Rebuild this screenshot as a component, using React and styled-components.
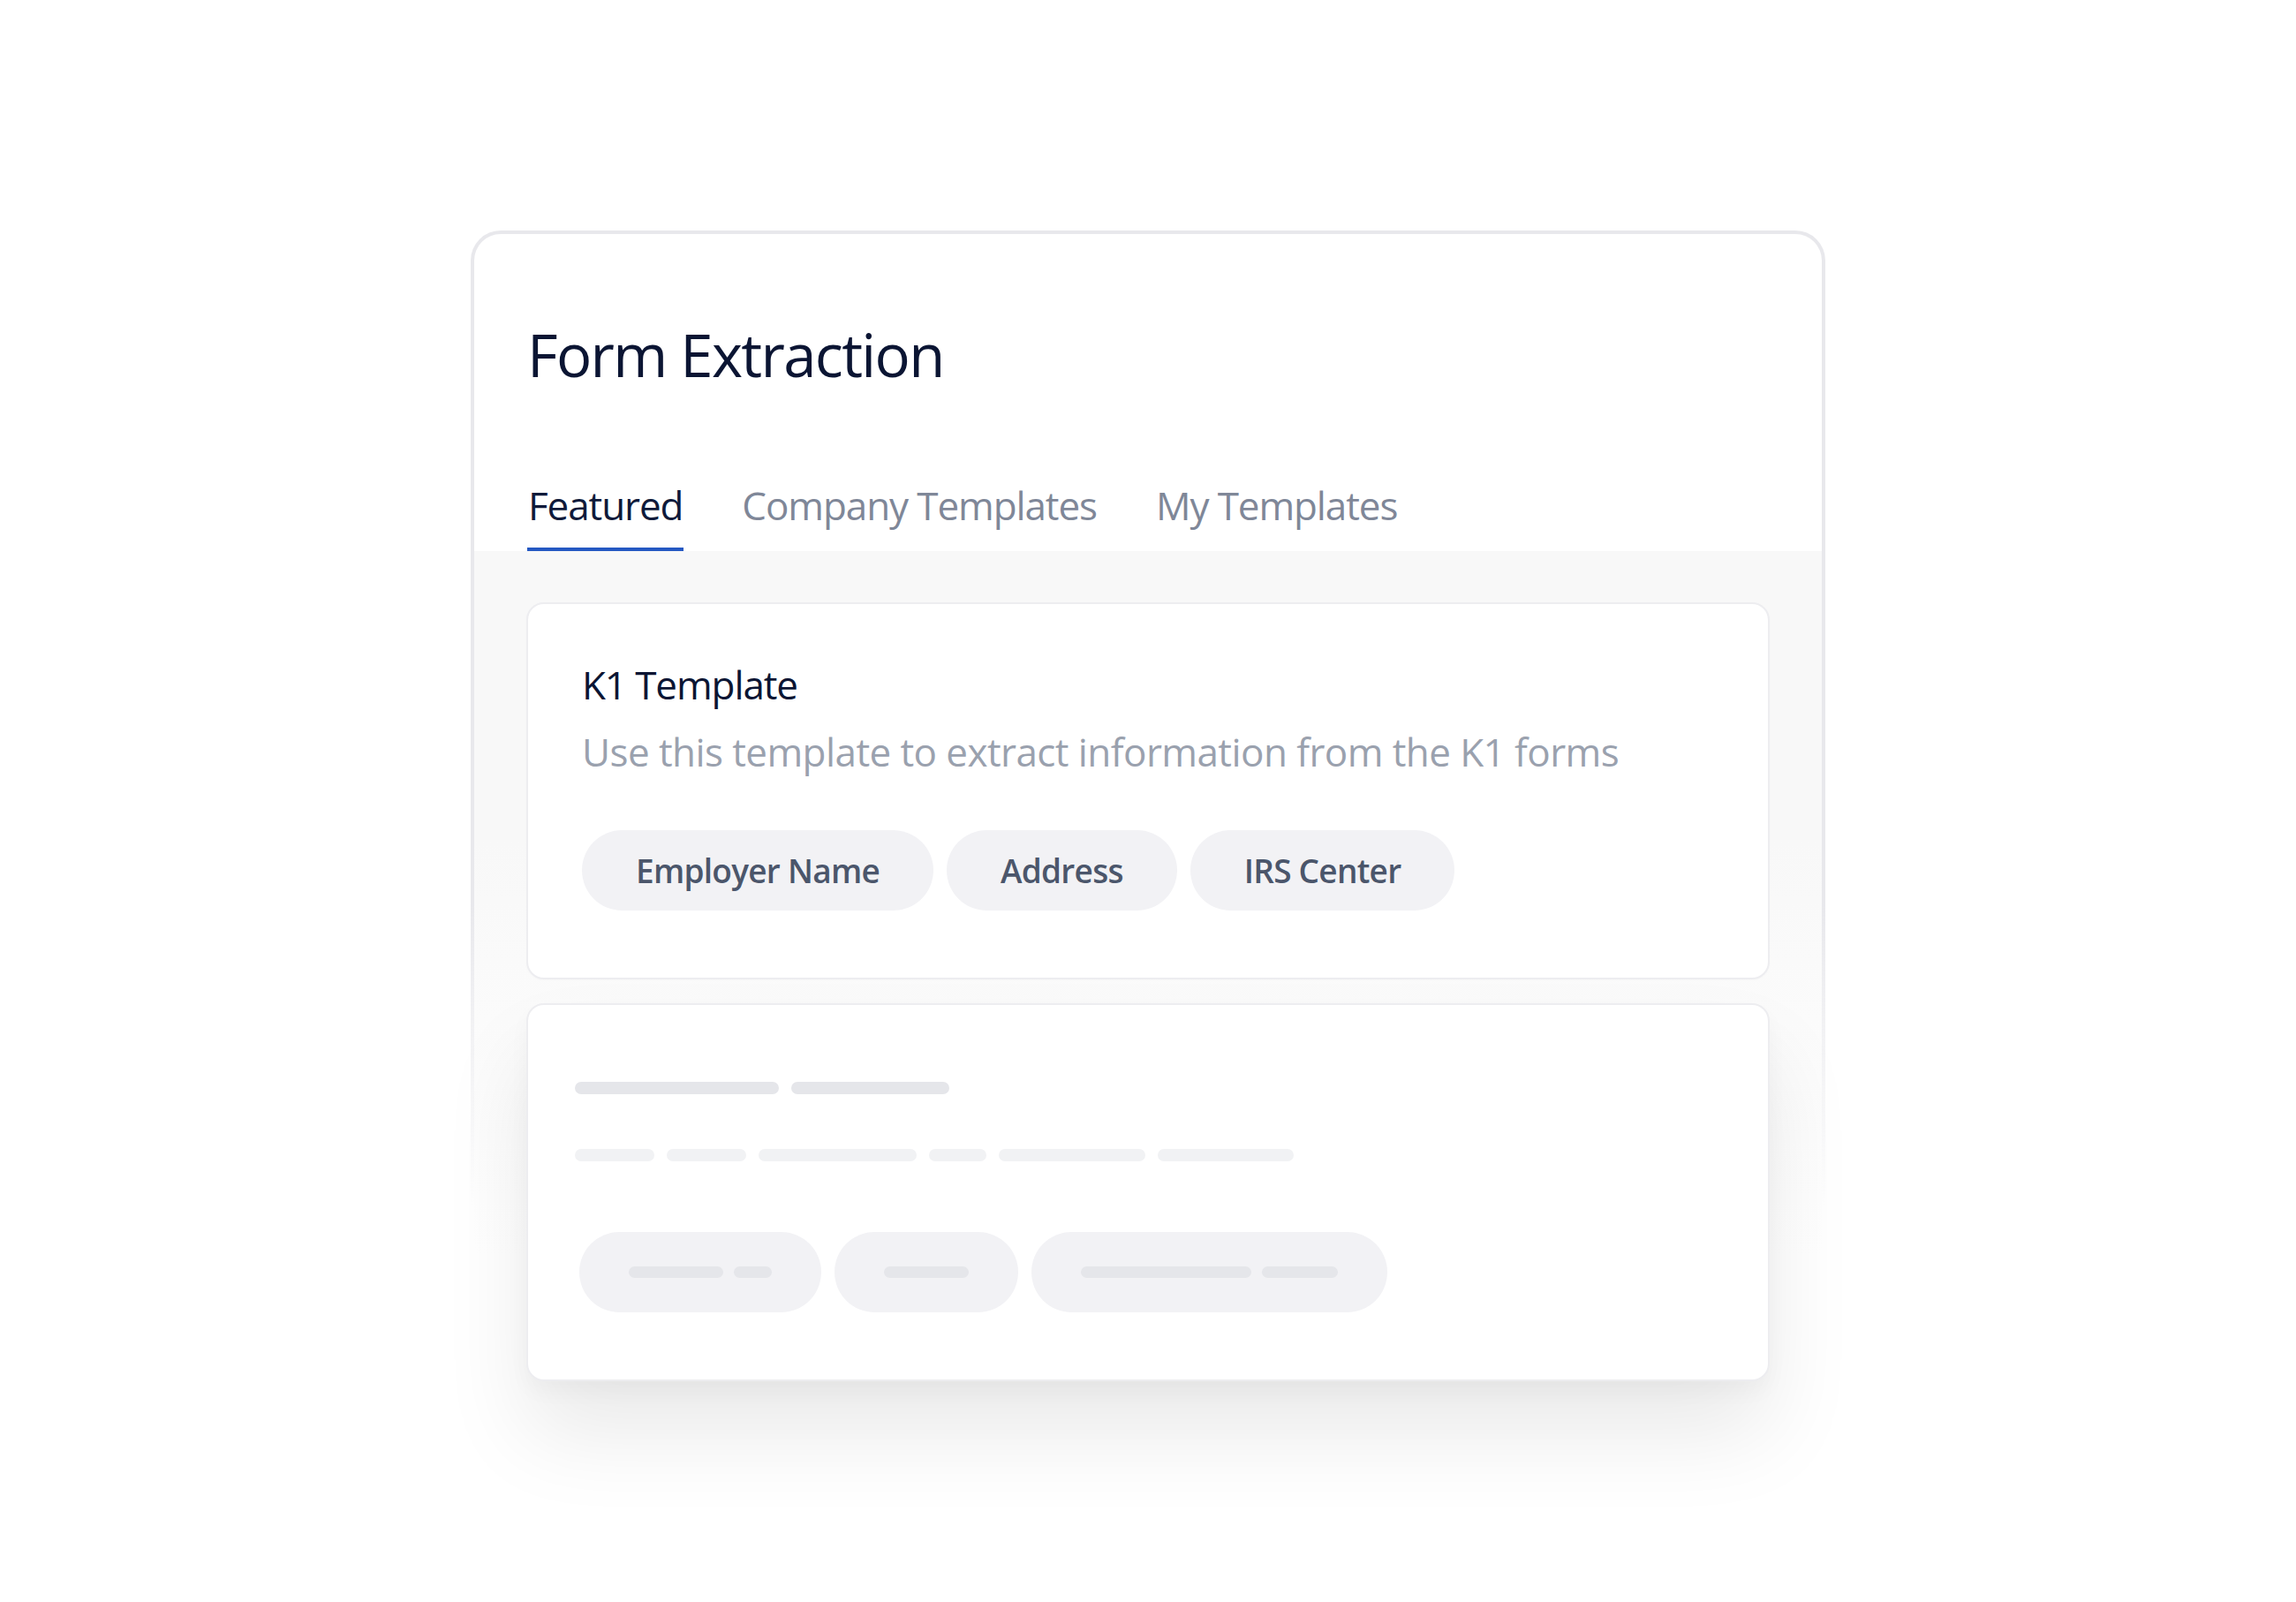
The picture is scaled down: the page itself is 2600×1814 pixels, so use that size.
import React from "react";
import styled, { createGlobalStyle } from "styled-components";

const GlobalStyle = createGlobalStyle`
  html, body {
    margin: 0;
    padding: 0;
    background: #ffffff;
  }
  body {
    font-family: "Open Sans", "Noto Sans", "Liberation Sans", sans-serif;
    -webkit-font-smoothing: antialiased;
  }
`;

const Page = styled.div`
  width: 2600px;
  height: 1814px;
  box-sizing: border-box;
  padding: 261px 0 0 533px;
  display: flex;
  align-items: flex-start;
`;

const Panel = styled.section`
  width: 1534px;
  height: 1226px;
  box-sizing: border-box;
  display: flex;
  flex-direction: column;
  border: 4px solid transparent;
  border-bottom-width: 0;
  border-radius: 34px 34px 0 0;
  background:
    linear-gradient(#ffffff, #ffffff) padding-box,
    linear-gradient(
        to bottom,
        #e8e8ec 0%,
        #e8e8ec 62%,
        rgba(232, 232, 236, 0) 90%
      )
      border-box;
`;

const Header = styled.header`
  display: flex;
  flex-direction: column;
  padding: 96px 60px 0;
`;

const Title = styled.h1`
  margin: 0;
  font-size: 67px;
  line-height: 1.2;
  font-weight: 400;
  letter-spacing: -0.025em;
  color: #0b1533;
`;

const Tabs = styled.nav`
  display: flex;
  gap: 65px;
  margin-top: 105px;
`;

const Tab = styled.div`
  font-size: 44px;
  line-height: 1.2;
  letter-spacing: -0.025em;
  padding: 0 1px 21px;
  color: ${(p) => (p.$active ? "#0f1a3a" : "#7f8798")};
  border-bottom: 4px solid ${(p) => (p.$active ? "#2458c2" : "transparent")};
`;

const Body = styled.div`
  flex: 1;
  display: flex;
  flex-direction: column;
  gap: 27px;
  padding: 58px 59px 0;
  background: linear-gradient(
    to bottom,
    #f8f8f8 0%,
    #f8f8f8 35%,
    #ffffff 85%
  );
`;

const Card = styled.article`
  display: flex;
  flex-direction: column;
  align-items: flex-start;
  background: #ffffff;
  border: 2px solid #ededf0;
  border-radius: 20px;
`;

const TemplateCard = styled(Card)`
  padding: 65px 61px 76px;
  box-shadow: 0 1px 3px rgba(0, 0, 0, 0.02);
`;

const GhostCard = styled(Card)`
  padding: 87px 53px 76px;
  box-shadow: 0 60px 100px rgba(0, 0, 0, 0.085), 0 12px 24px rgba(0, 0, 0, 0.03);
`;

const CardTitle = styled.h2`
  margin: 0;
  font-size: 44px;
  line-height: 1.2;
  font-weight: 400;
  letter-spacing: -0.025em;
  color: #0b1533;
`;

const CardText = styled.p`
  margin: 23px 0 0;
  font-size: 44px;
  line-height: 1.2;
  letter-spacing: -0.013em;
  color: #9aa1ae;
`;

const ChipRow = styled.div`
  display: flex;
  gap: 15px;
  margin-top: ${(p) => p.$mt}px;
  margin-left: ${(p) => p.$ml || 0}px;
`;

const Chip = styled.span`
  display: inline-flex;
  align-items: center;
  gap: 12px;
  height: 91px;
  padding: 0 ${(p) => p.$pad}px;
  border-radius: 46px;
  background: #f2f2f5;
  font-size: 37px;
  font-weight: 600;
  letter-spacing: -0.02em;
  color: #4b566b;
`;

const BarLine = styled.div`
  display: flex;
  gap: 14px;
  margin-top: ${(p) => p.$mt || 0}px;
`;

const Bar = styled.span`
  display: block;
  height: ${(p) => p.$h}px;
  border-radius: 8px;
  background: ${(p) => p.$c};
`;

const chips = ["Employer Name", "Address", "IRS Center"];
const titleBars = [231, 179];
const textBars = [90, 90, 179, 65, 166, 154];
const ghostChips = [[107, 43], [96], [193, 86]];

export default function App() {
  return (
    <>
      <GlobalStyle />
      <Page>
        <Panel>
          <Header>
            <Title>Form Extraction</Title>
            <Tabs>
              <Tab $active>Featured</Tab>
              <Tab>Company Templates</Tab>
              <Tab>My Templates</Tab>
            </Tabs>
          </Header>
          <Body>
            <TemplateCard>
              <CardTitle>K1 Template</CardTitle>
              <CardText>Use this template to extract information from the K1 forms</CardText>
              <ChipRow $mt={62}>
                {chips.map((c) => (
                  <Chip key={c} $pad={61}>
                    {c}
                  </Chip>
                ))}
              </ChipRow>
            </TemplateCard>
            <GhostCard>
              <BarLine>
                {titleBars.map((w, i) => (
                  <Bar key={i} $h={14} $c="#e5e6ea" style={{ width: w }} />
                ))}
              </BarLine>
              <BarLine $mt={62}>
                {textBars.map((w, i) => (
                  <Bar key={i} $h={14} $c="#f1f2f4" style={{ width: w }} />
                ))}
              </BarLine>
              <ChipRow $mt={80} $ml={5}>
                {ghostChips.map((bars, i) => (
                  <Chip key={i} $pad={56}>
                    {bars.map((w, j) => (
                      <Bar key={j} $h={13} $c="#e5e6ea" style={{ width: w }} />
                    ))}
                  </Chip>
                ))}
              </ChipRow>
            </GhostCard>
          </Body>
        </Panel>
      </Page>
    </>
  );
}
